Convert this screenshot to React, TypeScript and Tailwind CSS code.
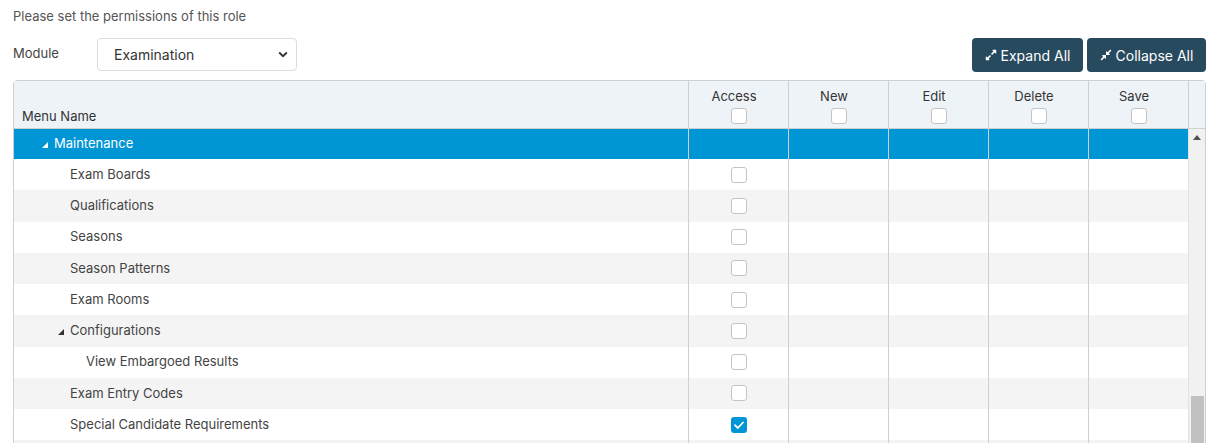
import { FaExpandAlt, FaCompressAlt } from "react-icons/fa";

type Row = { name: string; level: number; expandable?: boolean; checked?: boolean; selected?: boolean };

const rows: Row[] = [
  { name: "Maintenance", level: 0, expandable: true, selected: true },
  { name: "Exam Boards", level: 1 },
  { name: "Qualifications", level: 1 },
  { name: "Seasons", level: 1 },
  { name: "Season Patterns", level: 1 },
  { name: "Exam Rooms", level: 1 },
  { name: "Configurations", level: 1, expandable: true },
  { name: "View Embargoed Results", level: 2 },
  { name: "Exam Entry Codes", level: 1 },
  { name: "Special Candidate Requirements", level: 1, checked: true },
  { name: "", level: 1 },
];

const columns = ["Access", "New", "Edit", "Delete", "Save"];

function Triangle({ light }: { light?: boolean }) {
  return (
    <svg width="6" height="6" viewBox="0 0 6 6" className="mr-[6px] mt-[2px]">
      <polygon points="0,6 6,6 6,0" fill={light ? "#ffffff" : "#333333"} />
    </svg>
  );
}

function Checkbox({ checked }: { checked?: boolean }) {
  if (checked) {
    return (
      <span className="flex h-[16px] w-[16px] items-center justify-center rounded-[3px] bg-[#0095d5]">
        <svg width="10" height="8" viewBox="0 0 10 8">
          <path d="M1 4.2 L3.8 7 L9 1.5" stroke="#fff" strokeWidth="1.8" fill="none" strokeLinecap="round" strokeLinejoin="round" />
        </svg>
      </span>
    );
  }
  return <span className="block h-[16px] w-[16px] rounded-[3px] border border-[#c4c4c4] bg-white" />;
}

export default function App() {
  const indent = ["pl-[28px]", "pl-[44px]", "pl-[60px]"];
  const leafIndent = ["pl-[41px]", "pl-[56px]", "pl-[72px]"];

  return (
    <div className="h-[443px] w-full overflow-hidden bg-white pl-[13px] pr-[6px] font-['Inter',sans-serif] text-[13px] text-[#444]">
      <p className="pt-[7px] text-[13px] leading-[18px] text-[#555]">Please set the permissions of this role</p>

      <div className="mt-[13px] flex items-start justify-between">
        <div className="flex items-start">
          <label className="w-[84px] pt-[6px] text-[#444]">Module</label>
          <div className="flex h-[33px] w-[200px] items-center justify-between rounded-[4px] border border-[#dcdcdc] pl-[16px] pr-[8px] text-[14px] text-[#333]">
            <span>Examination</span>
            <svg width="10" height="7" viewBox="0 0 10 7">
              <path d="M1.2 1.5 L5 5.2 L8.8 1.5" stroke="#333" strokeWidth="1.8" fill="none" />
            </svg>
          </div>
        </div>
        <div className="flex gap-[4px]">
          <button className="flex h-[34px] w-[111px] items-center justify-center gap-[4px] rounded-[4px] bg-[#284a5e] text-[14px] text-white">
            <FaExpandAlt className="h-[12px] w-[12px]" />
            Expand All
          </button>
          <button className="flex h-[34px] w-[119px] items-center justify-center gap-[4px] rounded-[4px] bg-[#284a5e] text-[14px] text-white">
            <FaCompressAlt className="h-[12px] w-[12px]" />
            Collapse All
          </button>
        </div>
      </div>

      <div className="mt-[8px] rounded-tl-[4px] rounded-tr-[4px] border border-[#cfcfcf]">
        <div className="flex h-[48px] border-b border-[#cfcfcf] bg-[#eef3f8] text-[#333]">
          <div className="flex w-[674px] items-end pb-[2px] pl-[8px]">Menu Name</div>
          {columns.map((c) => (
            <div key={c} className="flex w-[100px] flex-col items-center border-l border-[#cfcfcf] pt-[7px]">
              <span className="mr-[9px] leading-[16px]">{c}</span>
              <span className="mt-[4px]">
                <Checkbox />
              </span>
            </div>
          ))}
          <div className="flex-1 border-l border-[#cfcfcf]" />
        </div>

        <div className="flex">
          <div className="flex-1">
            {rows.map((r, i) => (
              <div
                key={i}
                className={`flex ${i === 0 ? "h-[30px]" : "h-[31.25px]"} ${
                  r.selected ? "bg-[#0095d5] text-white" : i % 2 === 0 ? "bg-[#f4f4f4]" : "bg-white"
                }`}
              >
                <div
                  className={`flex w-[674px] items-center ${r.expandable ? indent[r.level] : leafIndent[r.level]}`}
                >
                  {r.expandable && <Triangle light={r.selected} />}
                  <span>{r.name}</span>
                </div>
                {columns.map((c, ci) => (
                  <div
                    key={c}
                    className={`flex w-[100px] items-center justify-center border-l ${
                      r.selected ? "border-[#d0d0d0]" : "border-[#cfcfcf]"
                    }`}
                  >
                    {ci === 0 && !r.selected && r.name && <Checkbox checked={r.checked} />}
                  </div>
                ))}
              </div>
            ))}
          </div>
          <div className="relative w-[17px] border-l border-[#e2e2e2] bg-[#f1f1f1]">
            <svg width="8" height="5" viewBox="0 0 8 5" className="absolute left-[4px] top-[6px]">
              <polygon points="0,5 8,5 4,0" fill="#505050" />
            </svg>
            <div className="absolute left-[2px] top-[267px] h-[60px] w-[13px] bg-[#c1c1c1]" />
          </div>
        </div>
      </div>
    </div>
  );
}
